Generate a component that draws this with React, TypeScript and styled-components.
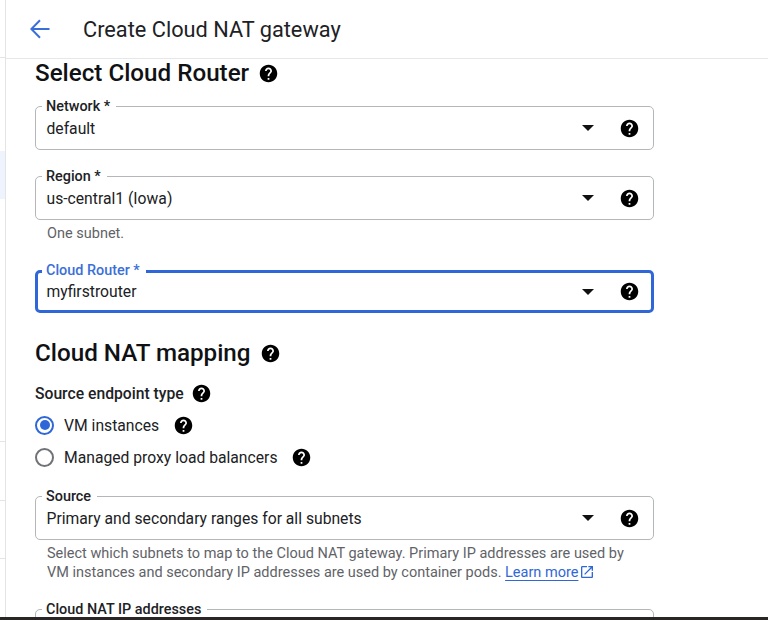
import styled, { createGlobalStyle } from "styled-components";

const HELP_PATH =
  "M12 2C6.48 2 2 6.48 2 12s4.48 10 10 10 10-4.48 10-10S17.52 2 12 2zm1 17h-2v-2h2v2zm2.07-7.75l-.9.92C13.45 12.9 13 13.5 13 15h-2v-.5c0-1.1.45-2.1 1.17-2.83l1.24-1.26c.37-.36.59-.86.59-1.41 0-1.1-.9-2-2-2s-2 .9-2 2H8c0-2.21 1.79-4 4-4s4 1.79 4 4c0 .88-.36 1.68-.93 2.25z";

const Help = () => (
  <HelpIcon viewBox="0 0 24 24" aria-hidden="true">
    <path d={HELP_PATH} />
  </HelpIcon>
);

const SelectField = (props: { label: string; value: string; gap: number; focused?: boolean }) => (
  <Field $focused={props.focused} $gap={props.gap}>
    <FieldLabel $focused={props.focused}>{props.label}</FieldLabel>
    <FieldValue>{props.value}</FieldValue>
    <Caret />
    <Help />
  </Field>
);

export default function App() {
  return (
    <>
      <GlobalStyle />
      <Page>
        <Window>
          <Rail>
            <RailRow $height={57} $ruled />
            <RailRow $height={93} />
            <RailRow $height={48} $active />
            <RailRow $height={242} $ruled />
            <RailRow $height={58} $ruled />
            <RailRow $height={57} $ruled />
          </Rail>
          <Main>
            <Header>
              <BackArrow viewBox="0 0 20 20" aria-hidden="true">
                <path d="M19.5 10H2M10 1.2 1.4 10l8.6 8.8" />
              </BackArrow>
              <PageTitle>Create Cloud NAT gateway</PageTitle>
            </Header>
            <Content>
              <SectionTitle>
                Select Cloud Router
                <Help />
              </SectionTitle>
              <SelectField label="Network *" value="default" gap={19} />
              <SelectField label="Region *" value="us-central1 (Iowa)" gap={26} />
              <Hint>One subnet.</Hint>
              <SelectField label="Cloud Router *" value="myfirstrouter" gap={27} focused />
              <SectionTitle $spaced>
                Cloud NAT mapping
                <Help />
              </SectionTitle>
              <GroupLabel>
                Source endpoint type
                <Help />
              </GroupLabel>
              <RadioRow>
                <Radio $checked />
                VM instances
                <Help />
              </RadioRow>
              <RadioRow>
                <Radio />
                Managed proxy load balancers
                <Help />
              </RadioRow>
              <SelectField label="Source" value="Primary and secondary ranges for all subnets" gap={27} />
              <Hint>
                Select which subnets to map to the Cloud NAT gateway. Primary IP addresses are used by
                VM instances and secondary IP addresses are used by container pods.{" "}
                <LearnMore href="#">Learn more</LearnMore>
                <ExternalIcon viewBox="0 0 24 24" aria-hidden="true">
                  <path d="M19 19H5V5h7V3H5c-1.11 0-2 .9-2 2v14c0 1.1.89 2 2 2h14c1.1 0 2-.9 2-2v-7h-2v7zM14 3v2h3.59l-9.83 9.83 1.41 1.41L19 6.41V10h2V3h-7z" />
                </ExternalIcon>
              </Hint>
              <SelectField label="Cloud NAT IP addresses" value="" gap={27} />
            </Content>
          </Main>
        </Window>
        <BottomEdge />
      </Page>
    </>
  );
}

//styles
const GlobalStyle = createGlobalStyle`
  html, body {
    margin: 0;
    padding: 0;
    background: #fff;
  }
  body {
    font-family: Roboto, "Liberation Sans", sans-serif;
    color: #202124;
  }
`;

const Page = styled.div`
  width: 768px;
  height: 620px;
  display: flex;
  flex-direction: column;
  overflow: hidden;
`;

const Window = styled.div`
  flex: 1;
  min-height: 0;
  display: flex;
  overflow: hidden;
`;

const BottomEdge = styled.div`
  height: 3px;
  background: #2b2626;
`;

const Rail = styled.div`
  width: 5px;
  flex-shrink: 0;
  border-right: 1px solid #e3e4e6;
  display: flex;
  flex-direction: column;
`;

const RailRow = styled.div<{ $height: number; $ruled?: boolean; $active?: boolean }>`
  height: ${(p) => p.$height}px;
  flex-shrink: 0;
  background: ${(p) => (p.$active ? "#eef3fd" : "transparent")};
  border-bottom: ${(p) => (p.$ruled ? "1px solid #e3e4e6" : "none")};
`;

const Main = styled.div`
  flex: 1;
  min-width: 0;
`;

const Header = styled.header`
  height: 58px;
  border-bottom: 1px solid #e6e7e9;
  display: flex;
  align-items: center;
  padding-left: 24px;
`;

const BackArrow = styled.svg`
  width: 20px;
  height: 20px;
  fill: none;
  stroke: #3b6fd8;
  stroke-width: 2;
  flex-shrink: 0;
`;

const PageTitle = styled.h1`
  margin: 0 0 0 33px;
  font-size: 21.75px;
  font-weight: 400;
  color: #202124;
`;

const Content = styled.div`
  width: 619px;
  padding-left: 29px;
`;

const HelpIcon = styled.svg`
  width: 21px;
  height: 21px;
  fill: #000;
  flex-shrink: 0;
`;

const SectionTitle = styled.h2<{ $spaced?: boolean }>`
  margin: ${(p) => (p.$spaced ? "26px 0 0" : "0")};
  height: 28px;
  display: flex;
  align-items: center;
  gap: 9px;
  font-size: 24.2px;
  font-weight: 500;
  color: #101114;
`;

const Field = styled.div<{ $focused?: boolean; $gap: number }>`
  position: relative;
  box-sizing: border-box;
  height: ${(p) => (p.$focused ? "43px" : "44px")};
  margin-top: ${(p) => p.$gap}px;
  padding: ${(p) => (p.$focused ? "0 11px 0 8.5px" : "0 13px 0 10.5px")};
  display: flex;
  align-items: center;
  border: ${(p) => (p.$focused ? "3px solid #2f67d8" : "1px solid #b4b6b9")};
  border-radius: 5px;
  background: #fff;

  & > svg {
    margin-left: 25px;
  }
`;

const FieldLabel = styled.label<{ $focused?: boolean }>`
  position: absolute;
  top: ${(p) => (p.$focused ? "-10px" : "-8px")};
  left: ${(p) => (p.$focused ? "4px" : "6px")};
  padding: 0 6px 0 4px;
  background: #fff;
  font-size: 14.4px;
  line-height: 16px;
  font-weight: 500;
  color: ${(p) => (p.$focused ? "#3b6fd8" : "#202124")};
`;

const FieldValue = styled.span`
  flex: 1;
  font-size: 15.7px;
  color: #202124;
`;

const Caret = styled.span`
  width: 0;
  height: 0;
  border-left: 6px solid transparent;
  border-right: 6px solid transparent;
  border-top: 6px solid #111;
`;

const Hint = styled.p`
  margin: 4px 0 0;
  padding: 0 28px 0 12px;
  font-size: 14.5px;
  line-height: 19px;
  color: #5f6368;
`;

const GroupLabel = styled.div`
  margin-top: 14px;
  height: 24px;
  display: flex;
  align-items: center;
  gap: 7px;
  font-size: 15.7px;
  font-weight: 500;
  color: #202124;
`;

const RadioRow = styled.label`
  margin-top: 8px;
  height: 24px;
  display: flex;
  align-items: center;
  font-size: 15.7px;
  color: #202124;

  & > svg {
    margin-left: 14px;
  }
`;

const Radio = styled.span<{ $checked?: boolean }>`
  box-sizing: border-box;
  width: 19px;
  height: 19px;
  margin-right: 10px;
  border-radius: 50%;
  border: 2px solid ${(p) => (p.$checked ? "#2f67d8" : "#6f7276")};
  display: flex;
  align-items: center;
  justify-content: center;

  &::after {
    content: "";
    width: 10px;
    height: 10px;
    border-radius: 50%;
    background: ${(p) => (p.$checked ? "#2f67d8" : "transparent")};
  }
`;

const LearnMore = styled.a`
  color: #2f67d8;
  text-decoration: underline;
  text-underline-offset: 3px;
  text-decoration-thickness: 1px;
`;

const ExternalIcon = styled.svg`
  width: 16px;
  height: 16px;
  margin-left: 1px;
  fill: #2f67d8;
  vertical-align: -3px;
`;
